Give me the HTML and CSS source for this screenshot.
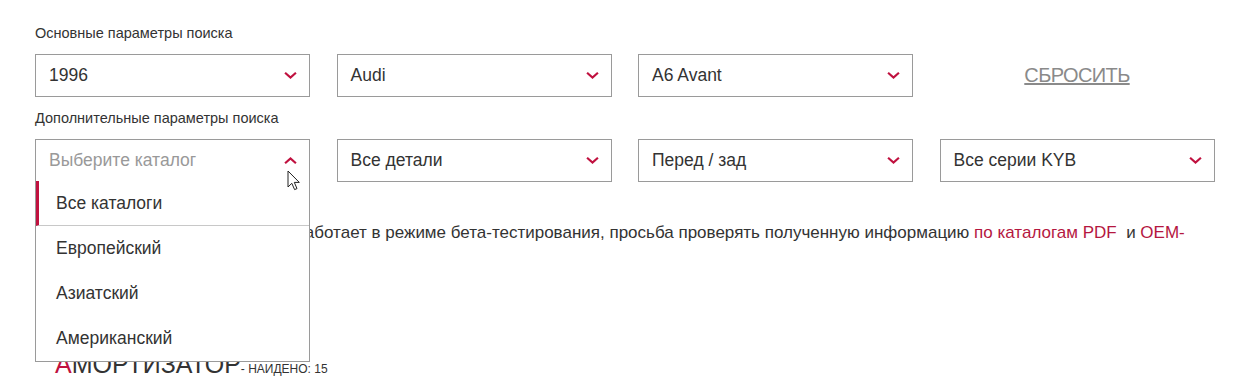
FILE: index.html
```html
<!DOCTYPE html>
<html lang="ru">
<head>
<meta charset="utf-8">
<link rel="stylesheet" href="styles.css">
</head>
<body>
<div class="page">
  <div class="label">Основные параметры поиска</div>
  <div class="row">
    <div class="select"><span>1996</span><svg class="chev" viewBox="0 0 12 8"><path d="M1 1.5 L6 6 L11 1.5"/></svg></div>
    <div class="select"><span>Audi</span><svg class="chev" viewBox="0 0 12 8"><path d="M1 1.5 L6 6 L11 1.5"/></svg></div>
    <div class="select"><span>A6 Avant</span><svg class="chev" viewBox="0 0 12 8"><path d="M1 1.5 L6 6 L11 1.5"/></svg></div>
    <div class="reset-cell"><a class="reset">СБРОСИТЬ</a></div>
  </div>
  <div class="label label2">Дополнительные параметры поиска</div>
  <div class="row">
    <div class="select open">
      <span class="placeholder">Выберите каталог</span><svg class="chev" viewBox="0 0 12 8"><path d="M1 6.5 L6 2 L11 6.5"/></svg>
      <ul class="menu">
        <li class="active">Все каталоги</li>
        <li>Европейский</li>
        <li>Азиатский</li>
        <li>Американский</li>
      </ul>
      <svg class="cursor" viewBox="0 0 13 21"><path d="M1 1 L1 17 L4.8 13.3 L7.6 19.6 L10 18.6 L7.3 12.4 L12.3 12.4 Z"/></svg>
    </div>
    <div class="select"><span>Все детали</span><svg class="chev" viewBox="0 0 12 8"><path d="M1 1.5 L6 6 L11 1.5"/></svg></div>
    <div class="select"><span>Перед / зад</span><svg class="chev" viewBox="0 0 12 8"><path d="M1 1.5 L6 6 L11 1.5"/></svg></div>
    <div class="select"><span>Все серии KYB</span><svg class="chev" viewBox="0 0 12 8"><path d="M1 1.5 L6 6 L11 1.5"/></svg></div>
  </div>
  <p class="info">Подбор деталей по автомобилю работает в режиме бета-тестирования, просьба проверять полученную информацию <a>по каталогам PDF</a>&nbsp; и <a>OEM-номерам</a>.</p>
  <h2 class="title"><span class="red">А</span>МОРТИЗАТОР<small>- НАИДЕНО: 15</small></h2>
</div>
</body>
</html>
```
FILE: styles.css
```css
* { box-sizing: border-box; }
html, body { margin: 0; padding: 0; background: #fff; }
body {
  font-family: "Liberation Sans", Arial, sans-serif;
  color: #333;
  overflow: hidden;
  height: 382px;
}
.page { padding: 23px 0 0 35px; width: 1213px; }
.label { font-size: 14.5px; line-height: 20px; color: #333; }
.label2 { margin-top: 11px; }
.row {
  display: grid;
  grid-template-columns: 275px 275px 275px 275px;
  column-gap: 26.5px;
  margin-top: 11px;
}
.select {
  position: relative;
  height: 43px;
  border: 1px solid #9a9a9a;
  display: flex;
  align-items: center;
  justify-content: space-between;
  padding: 0 12px 0 13px;
  font-size: 17.5px;
  color: #333;
  background: #fff;
}
.placeholder { color: #999; }
.chev { width: 13px; height: 9px; flex: none; }
.chev path { fill: none; stroke: #c0113f; stroke-width: 2; }
.reset-cell { display: flex; align-items: center; justify-content: center; }
.reset {
  font-size: 20px;
  color: #8a8a8a;
  text-decoration: underline;
  letter-spacing: -0.6px;
}
.menu {
  position: absolute;
  left: -1px;
  right: -1px;
  top: 41px;
  margin: 0;
  padding: 0;
  list-style: none;
  background: #fff;
  border: 1px solid #9a9a9a;
  border-top: none;
  z-index: 5;
}
.menu li {
  height: 45px;
  display: flex;
  align-items: center;
  padding-left: 20px;
  font-size: 17.5px;
  color: #333;
}
.menu li.active {
  border-left: 3px solid #c0113f;
  padding-left: 17px;
  border-bottom: 1px solid #c8c8c8;
}
.cursor {
  position: absolute;
  left: 251px;
  top: 30px;
  width: 13px;
  height: 21px;
  z-index: 6;
}
.cursor path { fill: #fff; stroke: #222; stroke-width: 1; }
.info {
  margin: 28px 0 0 0;
  font-size: 17px;
  line-height: 45px;
  color: #333;
}
.info a { color: #b5173f; }
.title {
  margin: 49px 0 0 20px;
  font-size: 25px;
  font-weight: normal;
  line-height: 30px;
  color: #333;
}
.title .red { color: #c0113f; }
.title small { font-size: 12px; color: #333; }
```
